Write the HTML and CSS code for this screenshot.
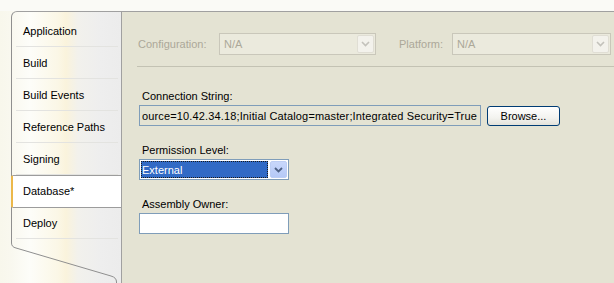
FILE: index.html
```html
<!DOCTYPE html>
<html lang="en">
  <head>
    <meta charset="UTF-8" />
    <title>Project Properties - Database</title>
    <link rel="stylesheet" href="styles.css">
  </head>
  <body>
    <div class="window">
      <div class="top-strip"></div>

      <div class="main">
        <!-- left tab column -->
        <div class="side">
          <ul class="tabs">
            <li class="tab">Application</li>
            <li class="tab">Build</li>
            <li class="tab">Build Events</li>
            <li class="tab">Reference Paths</li>
            <li class="tab">Signing</li>
            <li class="tab selected">Database*</li>
            <li class="tab">Deploy</li>
          </ul>
          <svg class="tabs-end" width="110" height="43" viewBox="0 0 110 43">
            <path d="M0.5 0 L0.5 3 Q0.5 7 5 8 L100 36 Q105.5 37.5 105.5 42 L105.5 43"
                  fill="none" stroke="#8f8f8f" stroke-width="1" />
          </svg>
        </div>

        <!-- property page -->
        <div class="panel">
          <div class="config-row">
            <span class="config-label">Configuration:</span>
            <div class="combo disabled config-combo">
              <span class="combo-value">N/A</span>
              <span class="drop-btn">
                <svg width="9" height="6" viewBox="0 0 9 6"><path d="M1 1 L4.5 4.5 L8 1" fill="none" stroke="#c3c2bb" stroke-width="1.6" /></svg>
              </span>
            </div>
            <span class="config-label platform-label">Platform:</span>
            <div class="combo disabled platform-combo">
              <span class="combo-value">N/A</span>
              <span class="drop-btn">
                <svg width="9" height="6" viewBox="0 0 9 6"><path d="M1 1 L4.5 4.5 L8 1" fill="none" stroke="#c3c2bb" stroke-width="1.6" /></svg>
              </span>
            </div>
          </div>

          <div class="separator"></div>

          <div class="fields">
            <div class="field">
              <label class="field-label">Connection String:</label>
              <div class="field-line">
                <div class="textbox readonly conn-box">ource=10.42.34.18;Initial Catalog=master;Integrated Security=True</div>
                <button class="xp-button">Browse...</button>
              </div>
            </div>

            <div class="field">
              <label class="field-label">Permission Level:</label>
              <div class="combo active small-box">
                <span class="combo-value"><span class="highlight">External</span></span>
                <span class="drop-btn">
                  <svg width="9" height="6" viewBox="0 0 9 6"><path d="M1 1 L4.5 4.5 L8 1" fill="none" stroke="#4d6185" stroke-width="1.8" /></svg>
                </span>
              </div>
            </div>

            <div class="field">
              <label class="field-label">Assembly Owner:</label>
              <div class="textbox small-box"></div>
            </div>
          </div>
        </div>
      </div>
    </div>
  </body>
</html>
```

FILE: styles.css
```css
:root {
  --panel: #e4e3d3;
  --frame-line: #a0a0a0;
  --disabled-text: #aca899;
  --input-border: #7f9db9;
  --text: #000000;
}

* {
  margin: 0;
  padding: 0;
  box-sizing: border-box;
}

body {
  font-family: Tahoma, "Liberation Sans", Arial, sans-serif;
  font-size: 11px;
  color: var(--text);
  background: #fafaf5;
}

.window {
  width: 614px;
  height: 283px;
  display: flex;
  flex-direction: column;
  overflow: hidden;
}

.top-strip {
  height: 11px;
  background: #fafaf6;
}

.main {
  flex: 1;
  display: flex;
}

/* ---- tab column ---- */

.side {
  width: 121px;
  padding-left: 11px;
  display: flex;
  flex-direction: column;
  background: linear-gradient(
    to right,
    #f8f7ec 0,
    #f9f8ef 11px,
    #fdfdf9 30px,
    #fbf7e6 58px,
    #faf3dc 66px,
    #f2f1ec 78px,
    #eeeeee 100px,
    #ececec 121px
  );
}

.tabs {
  list-style: none;
  border-top: 1px solid var(--frame-line);
  border-left: 1px solid #8f8f8f;
  border-top-left-radius: 6px;
  padding-top: 4px;
}

.tab {
  height: 32px;
  padding-left: 11px;
  padding-bottom: 1px;
  display: flex;
  align-items: center;
  border-bottom: 1px solid transparent;
  background: linear-gradient(#e3e3e0, #e3e3e0) no-repeat 4px 100% / calc(100% - 7px) 1px;
}

.tab.selected {
  margin-top: -1px;
  margin-left: -1px;
  height: 33px;
  padding-left: 10px;
  background: #ffffff;
  border-top: 1px solid #9c9c9c;
  border-bottom: 1px solid #9c9c9c;
  border-left: 2px solid #ecb84a;
  border-radius: 2px 0 0 2px;
}

.tabs-end {
  display: block;
}

/* ---- property panel ---- */

.panel {
  flex: 1;
  background: var(--panel);
  border-top: 1px solid var(--frame-line);
  border-left: 1px solid var(--frame-line);
}

.config-row {
  display: flex;
  align-items: center;
  padding: 21px 0 0 16px;
}

.config-label {
  width: 81px;
  color: var(--disabled-text);
}

.platform-label {
  margin-left: 23px;
  width: 53px;
}

.combo {
  height: 22px;
  display: flex;
  align-items: stretch;
  border: 1px solid var(--input-border);
  background: #ffffff;
  padding: 1px;
}

.combo-value {
  flex: 1;
  display: flex;
  align-items: center;
  padding-left: 3px;
  overflow: hidden;
  white-space: nowrap;
}

.drop-btn {
  width: 17px;
  display: flex;
  align-items: center;
  justify-content: center;
  border-radius: 2px;
}

.combo.disabled {
  border-color: #c9c7ba;
  background: #ebeadd;
  color: var(--disabled-text);
}

.combo.disabled .drop-btn {
  background: #f3f2ec;
  border: 1px solid #e0ded4;
}

.config-combo {
  width: 157px;
}

.platform-combo {
  width: 159px;
}

.separator {
  height: 1px;
  margin: 11px 0 0 15px;
  background: #c3c2b3;
}

.fields {
  padding: 23px 0 0 17px;
  display: flex;
  flex-direction: column;
  gap: 18px;
}

.field-label {
  display: block;
  height: 13px;
  line-height: 13px;
  padding-left: 3px;
  margin-bottom: 2px;
}

.field-line {
  display: flex;
  align-items: center;
  gap: 6px;
}

.textbox {
  height: 21px;
  border: 1px solid var(--input-border);
  background: #ffffff;
  display: flex;
  align-items: center;
  padding-left: 2px;
  white-space: nowrap;
  overflow: hidden;
}

.textbox.readonly {
  background: var(--panel);
}

.conn-box {
  width: 342px;
  letter-spacing: 0.14px;
}

.small-box {
  width: 150px;
  height: 21px;
}

.combo.active .combo-value {
  padding-left: 0;
}

.highlight {
  flex: 1;
  height: 100%;
  display: flex;
  align-items: center;
  padding-left: 1px;
  background: #316ac5;
  color: #ffffff;
  outline: 1px dotted #1a1a1a;
  outline-offset: -1px;
}

.combo.active .drop-btn {
  margin-left: 2px;
  background: linear-gradient(#c8d7fb, #b5c9f7);
  border: 1px solid #bccdf4;
}

.xp-button {
  width: 73px;
  height: 20px;
  font: inherit;
  color: var(--text);
  border: 1px solid #003c74;
  border-radius: 3px;
  background: linear-gradient(#ffffff, #f3f3ef 60%, #e3e2da);
  padding-top: 1px;
}
```
